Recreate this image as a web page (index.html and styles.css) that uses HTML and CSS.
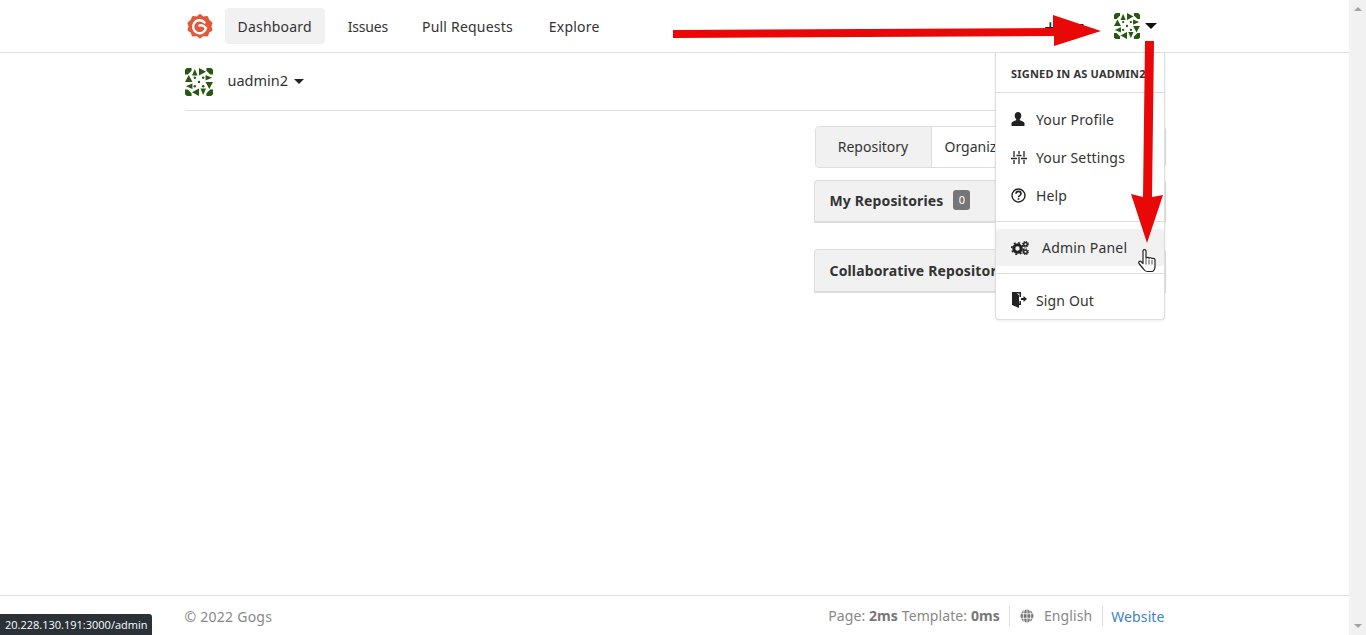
FILE: index.html
```html
<!DOCTYPE html>
<html lang="en">
<head>
<meta charset="utf-8">
<title>Gogs</title>
<link rel="stylesheet" href="styles.css">
</head>
<body>
<svg class="defs" width="0" height="0" aria-hidden="true">
  <symbol id="avatar" viewBox="0 0 30 30">
    <g id="q" fill="#26590f">
      <path d="M2 0H7V3L3 7H0V2z"/>
      <path d="M7.500 8L10.500 1L13.500 8z"/>
      <path d="M15 0L22.500 4L15 8z"/>
      <circle cx="10.500" cy="10.500" r="1.300"/>
    </g>
    <use href="#q" transform="rotate(90 15 15)"/>
    <use href="#q" transform="rotate(180 15 15)"/>
    <use href="#q" transform="rotate(270 15 15)"/>
    <circle cx="15" cy="15" r="1.300" fill="#26590f"/>
  </symbol>
</svg>
<div class="window">
  <div class="page">
    <header class="navbar">
      <div class="container nav-row">
        <svg class="logo" viewBox="0 0 26 26" width="26" height="26">
          <path fill="#de5a3b" stroke="#de5a3b" stroke-width="2" stroke-linejoin="round" d="M13 2l3 2.500 4-.5 1.500 3.500 3 2.500-1 3.500 1 3.500-3 2-1.500 3.500-4-.5-3 2.500-3-2.500-4 .5-1.500-3.500-3-2 1-3.500-1-3.500 3-2.500L6 4l4 .5z"/>
          <path fill="none" stroke="#fff" stroke-width="2.400" stroke-linecap="round" d="M17.500 9.500A6.500 6.500 0 1 0 19 15M12.500 12.500c3-1 5 1 6.500 2.500"/>
        </svg>
        <a class="nav-item active">Dashboard</a>
        <a class="nav-item nav-issues">Issues</a>
        <a class="nav-item">Pull Requests</a>
        <a class="nav-item">Explore</a>
        <div class="nav-right">
          <span class="plus">+</span>
          <span class="caret small-caret"></span>
          <svg class="avatar avatar-nav"><use href="#avatar"/></svg>
          <span class="caret dark-caret"></span>
        </div>
      </div>
    </header>

    <main class="container main">
      <div class="user-row">
        <svg class="avatar avatar-user"><use href="#avatar"/></svg>
        <span class="user-name">uadmin2</span>
        <span class="caret"></span>
      </div>
      <div class="side">
        <div class="tabs">
          <a class="tab tab-active">Repository</a>
          <a class="tab">Organization</a>
        </div>
        <div class="box box-first">
          <span class="box-title">My Repositories</span>
          <span class="count">0</span>
        </div>
        <div class="box box-second">
          <span class="box-title">Collaborative Repositories</span>
        </div>
      </div>
    </main>

    <footer class="footer">
      <div class="container footer-row">
        <span class="copyright">© 2022 Gogs</span>
        <div class="footer-right">
          <span class="timing">Page: <b>2ms</b> Template: <b>0ms</b></span>
          <span class="lang">
            <svg class="globe" viewBox="0 0 14 14" width="14" height="14">
              <circle cx="7" cy="7" r="6.500" fill="#777"/>
              <path d="M0 4.700h14M0 9.300h14M7 0v14M4.500 .8c-1.600 4-1.600 8.400 0 12.400M9.500 .8c1.600 4 1.600 8.400 0 12.400" fill="none" stroke="#fff" stroke-width=".8"/>
            </svg>
            English
          </span>
          <a class="site-link">Website</a>
        </div>
      </div>
    </footer>
  </div>
  <div class="scrollbar"><span class="scroll-arrow scroll-up"></span><span class="scroll-arrow"></span></div>

  <div class="menu">
    <div class="menu-header">Signed in as uadmin2</div>
    <div class="menu-group">
      <a class="menu-item">
        <span class="icon-slot"><svg viewBox="0 0 14 14" width="14" height="14"><path fill="#222" d="M7 0c2 0 3.300 1.500 3.300 3.700 0 1.500-.7 2.800-1.500 3.500v1.100c2 .7 4.200 1.400 4.700 2.700v3H.5v-3c.5-1.300 2.700-2 4.700-2.700V7.200c-.8-.7-1.500-2-1.500-3.500C3.700 1.500 5 0 7 0z"/></svg></span>
        Your Profile
      </a>
      <a class="menu-item">
        <span class="icon-slot"><svg class="sliders" viewBox="0 0 16 13" width="16" height="13"><path fill="none" stroke="#222" stroke-width="1.300" d="M3 0v6M3 9v4M8 0v3M8 6v7M13 0v6M13 9v4M0 7.500h6M5.500 4.500h5M10 7.500h6"/></svg></span>
        Your Settings
      </a>
      <a class="menu-item">
        <span class="icon-slot"><svg viewBox="0 0 15 15" width="15" height="15"><circle cx="7.500" cy="7.500" r="6.500" fill="none" stroke="#222" stroke-width="1.400"/><path fill="none" stroke="#222" stroke-width="1.600" d="M5 5.800c0-3.200 5-3.200 5 0 0 1.900-2.500 1.700-2.500 3.400"/><path fill="#222" d="M6.700 10.200h1.600v1.600H6.700z"/></svg></span>
        Help
      </a>
    </div>
    <div class="menu-divider"></div>
    <a class="menu-item menu-item-hover">
      <span class="icon-slot icon-slot-wide"><svg viewBox="0 0 18 14" width="18" height="14">
        <circle cx="6.500" cy="7.500" r="3.700" fill="none" stroke="#222" stroke-width="3"/>
        <circle cx="6.500" cy="7.500" r="5.800" fill="none" stroke="#222" stroke-width="1.600" stroke-dasharray="2 2.550"/>
        <circle cx="14.500" cy="3.200" r="1.800" fill="none" stroke="#222" stroke-width="1.500"/>
        <circle cx="14.500" cy="3.200" r="3" fill="none" stroke="#222" stroke-width="1" stroke-dasharray="1.300 1.050"/>
        <circle cx="14.500" cy="10.800" r="1.800" fill="none" stroke="#222" stroke-width="1.500"/>
        <circle cx="14.500" cy="10.800" r="3" fill="none" stroke="#222" stroke-width="1" stroke-dasharray="1.300 1.050"/>
      </svg></span>
      Admin Panel
    </a>
    <div class="menu-divider"></div>
    <a class="menu-item">
      <span class="icon-slot"><svg viewBox="0 0 16 16" width="16" height="16"><path fill="#222" d="M1 0h9v5H8.500V1.500H5.500L8 3v8.500h.5V9H10v4H8v3L1 13z"/><path fill="#222" d="M10 6h2.500V4L16 7l-3.500 3V8H10z"/></svg></span>
      Sign Out
    </a>
  </div>

  <div class="status">20.228.130.191:3000/admin</div>

  <svg class="overlay" viewBox="0 0 1366 635" width="1366" height="635" aria-hidden="true">
    <path fill="#e80808" d="M673 30L1053 28L1053 15L1101 31L1054 46L1054 36L673 38z"/>
    <path fill="#e80808" d="M1145 41h9L1152 197L1163 195L1147 243L1131 194L1143 197z"/>
    <g transform="translate(-1 -1.500)">
      <path fill="#fff" stroke="#222" stroke-width="1.200" stroke-linejoin="round" d="M1144 252c1-1.500 3-1 3 .5v7c1-.8 2.500-.8 3 .2 1-.8 2.500-.6 3 .4 1-.6 2.500-.2 3 .8V268c0 2.500-1.500 5-3 5h-5c-1.500 0-2.500-1-3.500-2.500L1140 265c-1-1.500 1-3 2-2l2 2z"/>
      <path fill="none" stroke="#222" stroke-width=".8" d="M1147 260v6M1150 261v5M1153 261.500v4.500"/>
    </g>
  </svg>
</div>
</body>
</html>
```

FILE: styles.css
```css
* { box-sizing: border-box; }
html, body { margin: 0; padding: 0; height: 100%; overflow: hidden; }
body {
  font-family: "Noto Sans", "Open Sans", "Liberation Sans", sans-serif;
  font-size: 14px;
  color: rgba(0, 0, 0, .87);
  background: #fff;
}
a { color: inherit; text-decoration: none; }
.defs { position: absolute; }

.window { position: relative; display: flex; width: 1366px; height: 635px; overflow: hidden; }
.page { flex: 1; display: flex; flex-direction: column; min-width: 0; }
.scrollbar { width: 17px; background: #f1f1f1; display: flex; flex-direction: column; justify-content: space-between; align-items: center; padding: 7px 0; }
.scroll-arrow { width: 0; height: 0; border-left: 4.500px solid transparent; border-right: 4.500px solid transparent; border-top: 4px solid #a3a3a3; }
.scroll-up { border-top: 0; border-bottom: 4px solid #a3a3a3; }

.container { width: 980px; margin: 0 auto; }

.navbar { height: 53px; border-bottom: 1px solid #ddd; flex: none; }
.nav-row { display: flex; align-items: center; height: 52px; padding-left: 2px; }
.logo { margin-right: 12px; }
.nav-item { height: 36px; line-height: 38px; padding: 0 13px; margin-right: 10px; border-radius: 4px; color: #333; letter-spacing: .2px; }
.nav-item.active { background: #f1f1f1; }
.nav-issues { letter-spacing: -.2px; padding-right: 11px; }
.nav-right { margin-left: auto; display: flex; align-items: center; padding-right: 8px; }
.plus { font-size: 22px; color: #222; line-height: 1; margin-right: 17px; }
.small-caret { margin-right: 30px; }
.avatar { display: block; }
.avatar-nav { width: 26px; height: 26px; margin-right: 5px; }
.avatar-user { width: 28px; height: 28px; }

.caret { display: inline-block; width: 0; height: 0; border-left: 5px solid transparent; border-right: 5px solid transparent; border-top: 5px solid #222; }
.dark-caret { border-left-width: 6px; border-right-width: 6px; border-top-width: 6px; border-top-color: #111; }

.main { flex: 1; min-height: 0; }
.user-row { display: flex; align-items: center; height: 58px; border-bottom: 1px solid #ddd; }
.user-name { margin: 0 6px 4px 15px; color: #333; font-size: 14.500px; }

.side { width: 352px; margin-left: auto; margin-right: -1px; padding-top: 15px; }
.tabs { display: flex; width: 351px; margin-left: 1px; height: 42px; border: 1px solid #ddd; border-radius: 4px; overflow: hidden; }
.tab { line-height: 40px; width: 231px; padding-left: 13px; color: #333; }
.tab-active { flex: none; width: 116px; padding: 0; text-align: center; background: #f1f1f1; border-right: 1px solid #ddd; }

.box { height: 43px; display: flex; align-items: center; padding: 0 15px 2px 14px; background: #f1f1f1; border: 1px solid #ddd; border-bottom-width: 2px; border-radius: 4px 4px 0 0; white-space: nowrap; overflow: hidden; }
.box-first { margin-top: 12px; }
.box-second { margin-top: 26px; height: 44px; padding-bottom: 0; }
.box-title { margin-left: 1px; font-weight: 700; color: #333; letter-spacing: .14px; }
.count { margin-left: 10px; width: 17px; height: 20px; border-radius: 3px; background: #767676; color: #fff; font-size: 11px; line-height: 20px; text-align: center; }

.footer { height: 40px; flex: none; border-top: 1px solid #ddd; color: #888; letter-spacing: .1px; }
.footer-row { display: flex; align-items: center; justify-content: space-between; height: 40px; }
.copyright { letter-spacing: .25px; }
.footer-right { display: flex; align-items: center; }
.timing { padding-right: 9px; border-right: 1px solid #ddd; line-height: 20px; }
.timing b { color: #777; }
.lang { display: flex; align-items: center; gap: 10px; padding: 0 10px; border-right: 1px solid #ddd; line-height: 20px; }
.globe { display: block; }
.site-link { padding-left: 8px; color: #4183c4; }

.menu { position: absolute; left: 995px; top: 53px; width: 170px; height: 267px; background: #fff; border: 1px solid #ddd; border-top: 0; border-radius: 0 0 4px 4px; box-shadow: 0 1px 3px rgba(0, 0, 0, .08); }
.menu-header { height: 40px; line-height: 42px; padding-left: 15px; font-size: 11px; font-weight: 700; text-transform: uppercase; letter-spacing: .2px; color: #333; border-bottom: 1px solid #ddd; white-space: nowrap; overflow: hidden; }
.menu-group { padding-top: 7px; }
.menu-item { display: flex; align-items: center; height: 38px; padding-left: 15px; color: #333; letter-spacing: .15px; }
.icon-slot { flex: none; width: 25px; display: flex; align-items: center; }
.icon-slot svg { display: block; flex: none; }
.icon-slot-wide { width: 31px; }
.menu-divider { height: 1px; background: #ddd; margin: 7px 0; }
.menu-item-hover { background: #f1f1f1; height: 37px; border-radius: 3px; letter-spacing: .2px; }

.status { position: absolute; left: 0; bottom: 0; height: 21px; line-height: 21px; padding: 0 5px; font-family: "Open Sans", "Noto Sans", sans-serif; font-size: 11px; color: #fff; background: #2a3238; border-top-right-radius: 3px; }

.overlay { position: absolute; left: 0; top: 0; pointer-events: none; }
```
